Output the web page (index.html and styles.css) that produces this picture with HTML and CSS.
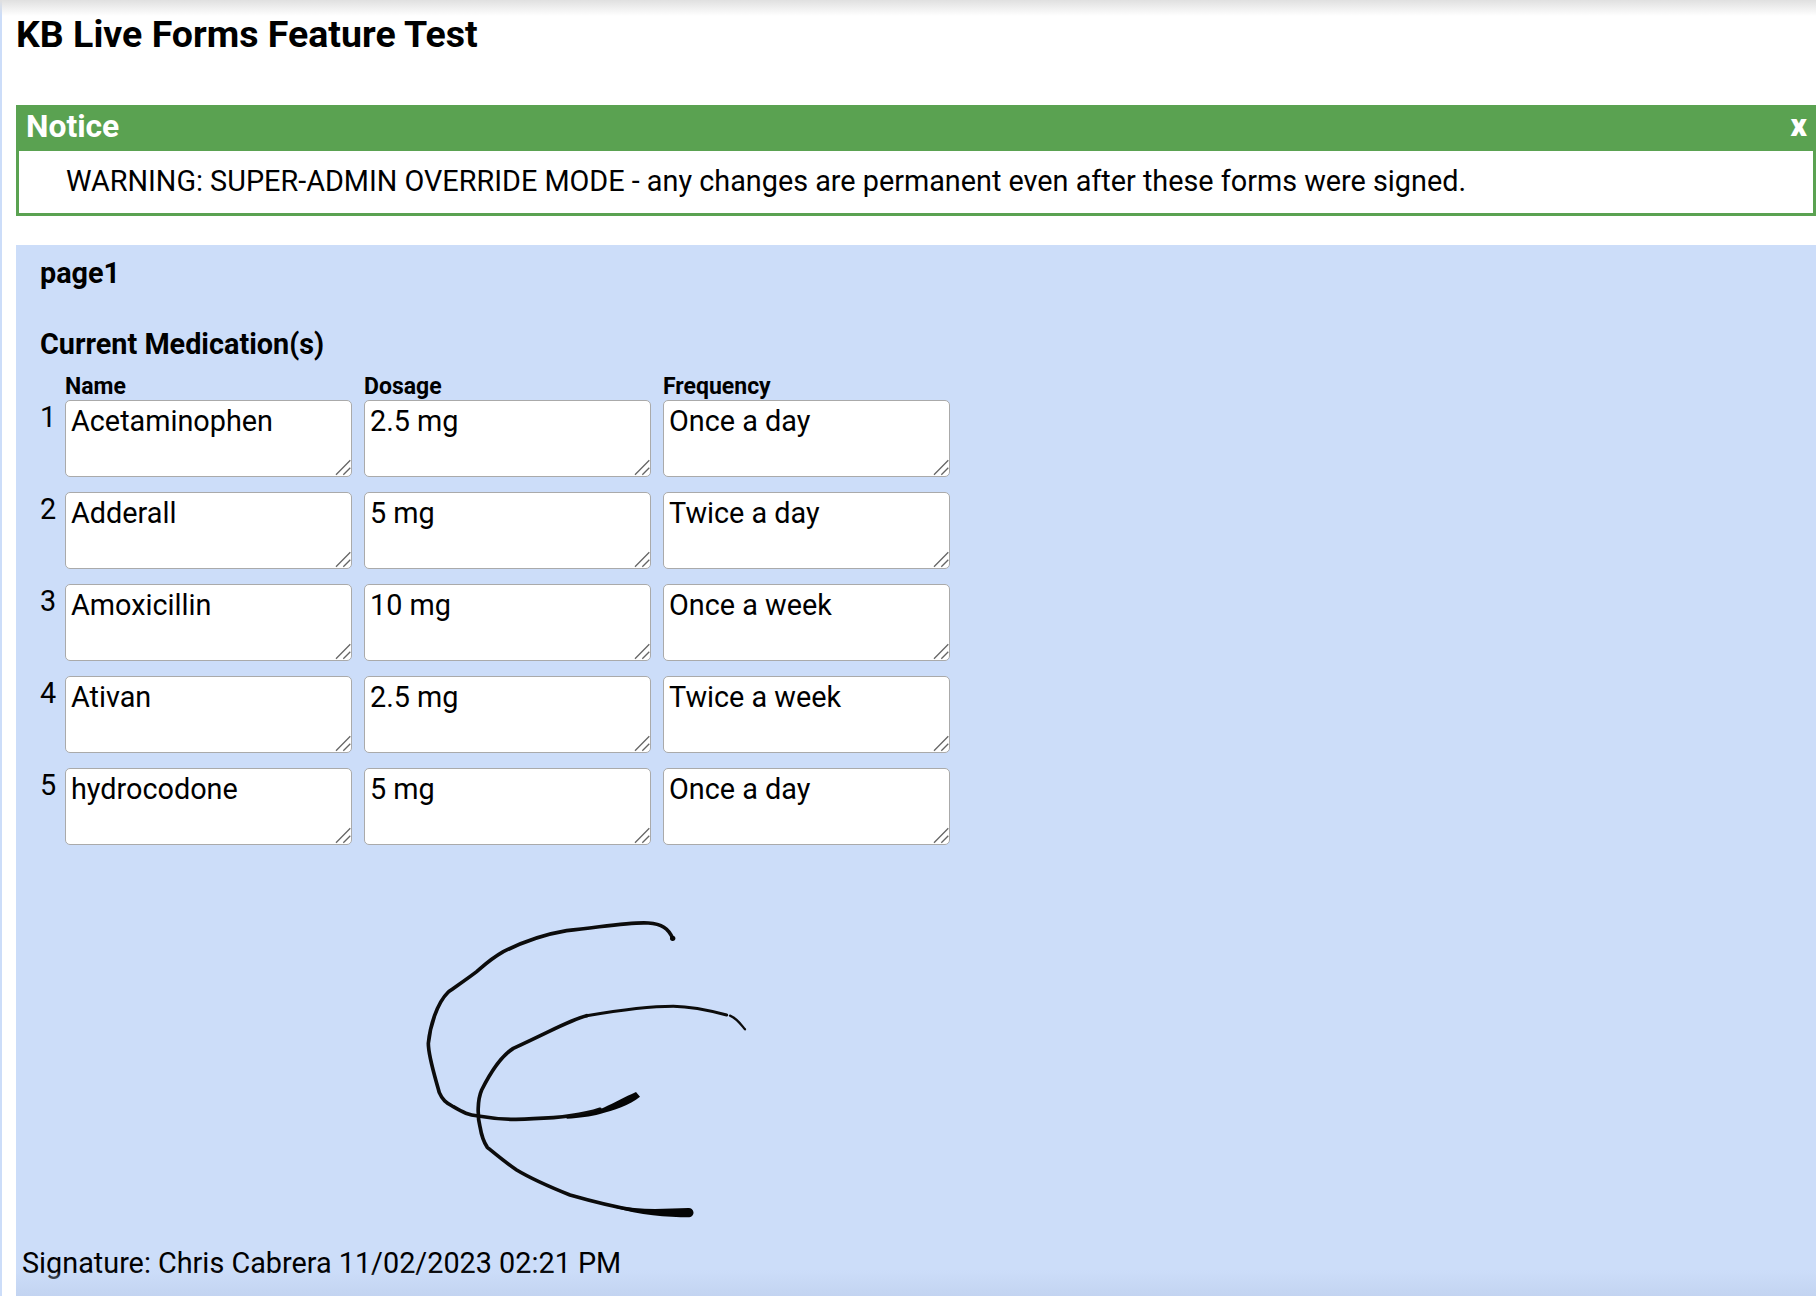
FILE: index.html
```html
<!DOCTYPE html>
<html lang="en">
<head>
  <meta charset="UTF-8">
  <title>KB Live Forms Feature Test</title>
  <link rel="stylesheet" href="styles.css">
</head>
<body>
  <svg class="icon-defs" width="0" height="0">
    <symbol id="grip" viewBox="0 0 18 18">
      <path d="M2 15.700L16.300 1.300M9.300 15.700L16.300 8.700"/>
    </symbol>
  </svg>

  <h1 class="page-title">KB Live Forms Feature Test</h1>

  <div class="notice">
    <div class="notice-head">
      <span>Notice</span>
      <span class="notice-close">x</span>
    </div>
    <div class="notice-body">WARNING: SUPER-ADMIN OVERRIDE MODE - any changes are permanent even after these forms were signed.</div>
  </div>

  <div class="form-page">
    <div class="form-fields">
      <h2 class="page-name">page1</h2>
      <h3 class="field-title">Current Medication(s)</h3>

      <div class="med-row med-head">
        <span></span>
        <span>Name</span>
        <span>Dosage</span>
        <span>Frequency</span>
      </div>
      <div class="med-row">
        <span class="med-num">1</span>
        <div class="med-cell"><textarea class="med-input">Acetaminophen</textarea><svg class="grip"><use href="#grip"/></svg></div>
        <div class="med-cell"><textarea class="med-input">2.5 mg</textarea><svg class="grip"><use href="#grip"/></svg></div>
        <div class="med-cell"><textarea class="med-input">Once a day</textarea><svg class="grip"><use href="#grip"/></svg></div>
      </div>
      <div class="med-row">
        <span class="med-num">2</span>
        <div class="med-cell"><textarea class="med-input">Adderall</textarea><svg class="grip"><use href="#grip"/></svg></div>
        <div class="med-cell"><textarea class="med-input">5 mg</textarea><svg class="grip"><use href="#grip"/></svg></div>
        <div class="med-cell"><textarea class="med-input">Twice a day</textarea><svg class="grip"><use href="#grip"/></svg></div>
      </div>
      <div class="med-row">
        <span class="med-num">3</span>
        <div class="med-cell"><textarea class="med-input">Amoxicillin</textarea><svg class="grip"><use href="#grip"/></svg></div>
        <div class="med-cell"><textarea class="med-input">10 mg</textarea><svg class="grip"><use href="#grip"/></svg></div>
        <div class="med-cell"><textarea class="med-input">Once a week</textarea><svg class="grip"><use href="#grip"/></svg></div>
      </div>
      <div class="med-row">
        <span class="med-num">4</span>
        <div class="med-cell"><textarea class="med-input">Ativan</textarea><svg class="grip"><use href="#grip"/></svg></div>
        <div class="med-cell"><textarea class="med-input">2.5 mg</textarea><svg class="grip"><use href="#grip"/></svg></div>
        <div class="med-cell"><textarea class="med-input">Twice a week</textarea><svg class="grip"><use href="#grip"/></svg></div>
      </div>
      <div class="med-row">
        <span class="med-num">5</span>
        <div class="med-cell"><textarea class="med-input">hydrocodone</textarea><svg class="grip"><use href="#grip"/></svg></div>
        <div class="med-cell"><textarea class="med-input">5 mg</textarea><svg class="grip"><use href="#grip"/></svg></div>
        <div class="med-cell"><textarea class="med-input">Once a day</textarea><svg class="grip"><use href="#grip"/></svg></div>
      </div>
    </div>

    <svg class="signature-img" viewBox="0 0 1140 1020" width="380" height="340">
      <g class="sig-line">
        <path d="M818 115C805 85 785 72 745 69C700 65 640 76 500 92C440 102 370 125 310 155C270 178 250 198 230 215C200 238 170 258 145 276C110 310 90 380 85 430C85 470 105 530 118 578C128 602 140 608 160 620C190 638 205 645 235 648C290 658 350 660 400 656C470 654 540 648 600 628"/>
        <path d="M700 930C640 920 580 905 510 885C460 865 400 840 350 810C320 790 290 765 262 742C250 725 245 710 240 680C232 650 232 600 245 570C265 530 300 470 340 445C470 385 510 360 560 347"/>
        <path class="sig-mid" d="M560 347C650 332 760 319 820 319C880 320 930 332 980 345"/>
        <path class="sig-thin" d="M1035 388C1020 370 1010 355 990 347"/>
      </g>
      <path class="sig-blob" d="M500 652C590 644 640 606 708 576L720 590C690 616 640 630 600 642C570 650 540 654 500 656Z"/>
      <path class="sig-blob" d="M640 916C720 932 800 926 865 924A14 14 0 1 1 868 952C800 952 720 946 640 922Z"/>
      <circle class="sig-blob" cx="818" cy="115" r="8"/>
    </svg>

    <div class="signature-text">Signature: Chris Cabrera 11/02/2023 02:21 PM</div>
  </div>
</body>
</html>
```

FILE: styles.css
```css
html, body {
  height: 100%;
}

body {
  margin: 0;
  padding: 13px 0 0 16px;
  box-sizing: border-box;
  overflow: hidden;
  position: relative;
  background-color: #fff;
  color: #000;
  font-family: Roboto, "Liberation Sans", sans-serif;
  font-size: 28.8px;
}

/* blue strip down the left edge */
body::before {
  content: "";
  position: absolute;
  left: 0;
  top: 0;
  bottom: 0;
  width: 2px;
  background-color: #ccddf9;
}

/* shadow under the browser bar */
body::after {
  content: "";
  position: absolute;
  left: 0;
  right: 0;
  top: 0;
  height: 16px;
  background: linear-gradient(#e0e0e0, rgba(255, 255, 255, 0));
}

.icon-defs {
  position: absolute;
}

.page-title {
  margin: 0 0 50px;
  font-size: 37.5px;
  line-height: 42px;
  font-weight: 700;
}

.notice {
  border: 3px solid #5aa251;
}

.notice-head {
  display: flex;
  justify-content: space-between;
  padding: 0 6px 6px 7px;
  background-color: #5aa251;
  color: #fff;
  font-size: 31.8px;
  font-weight: 700;
  line-height: 37px;
}

.notice-close {
  font-weight: 900;
  margin-top: -1px;
}

.notice-body {
  padding-left: 47px;
  height: 62px;
  line-height: 61px;
}

.form-page {
  position: relative;
  margin-top: 29px;
  height: 1051px;
  background-color: #ccddf9;
}

/* darker band at the bottom of the window */
.form-page::after {
  content: "";
  position: absolute;
  left: 0;
  right: 0;
  bottom: 0;
  height: 26px;
  background: linear-gradient(rgba(190, 208, 238, 0), #c3d4f1);
}

.form-fields {
  padding: 12px 24px 0;
}

.page-name {
  margin: 0 0 38px;
  font-size: 28.8px;
  line-height: 33px;
  font-weight: 700;
}

.field-title {
  margin: 0 0 13px;
  font-size: 28.8px;
  line-height: 33px;
  font-weight: 700;
}

.med-row {
  display: grid;
  grid-template-columns: 13px repeat(3, 287px);
  column-gap: 12px;
  margin-bottom: 15px;
  line-height: 34px;
}

.med-head {
  margin-bottom: 0;
  font-size: 23px;
  font-weight: 700;
  line-height: 25px;
  padding-bottom: 1px;
}

.med-cell {
  position: relative;
  height: 77px;
}

.med-input {
  display: block;
  box-sizing: border-box;
  width: 100%;
  height: 77px;
  margin: 0;
  padding: 3px 5px;
  border: 1px solid #aaa;
  border-radius: 5px;
  background-color: #fff;
  color: #000;
  font-family: Roboto, "Liberation Sans", sans-serif;
  font-size: 28.8px;
  line-height: 34px;
  resize: none;
}

.grip {
  position: absolute;
  right: 0;
  bottom: 0;
  width: 18px;
  height: 18px;
  fill: none;
  stroke: #666;
  stroke-width: 1.3;
}

.signature-img {
  display: block;
  margin: 55px 0 0 384px;
  filter: blur(0.5px);
}

.sig-line {
  fill: none;
  stroke: #0c0c0c;
  stroke-width: 11;
  stroke-linecap: round;
  stroke-linejoin: round;
}

.sig-line .sig-mid {
  stroke-width: 9;
}

.sig-line .sig-thin {
  stroke-width: 7;
}

.sig-blob {
  fill: #050505;
}

.signature-text {
  margin-top: 6px;
  padding-left: 6px;
  line-height: 34px;
}
```
